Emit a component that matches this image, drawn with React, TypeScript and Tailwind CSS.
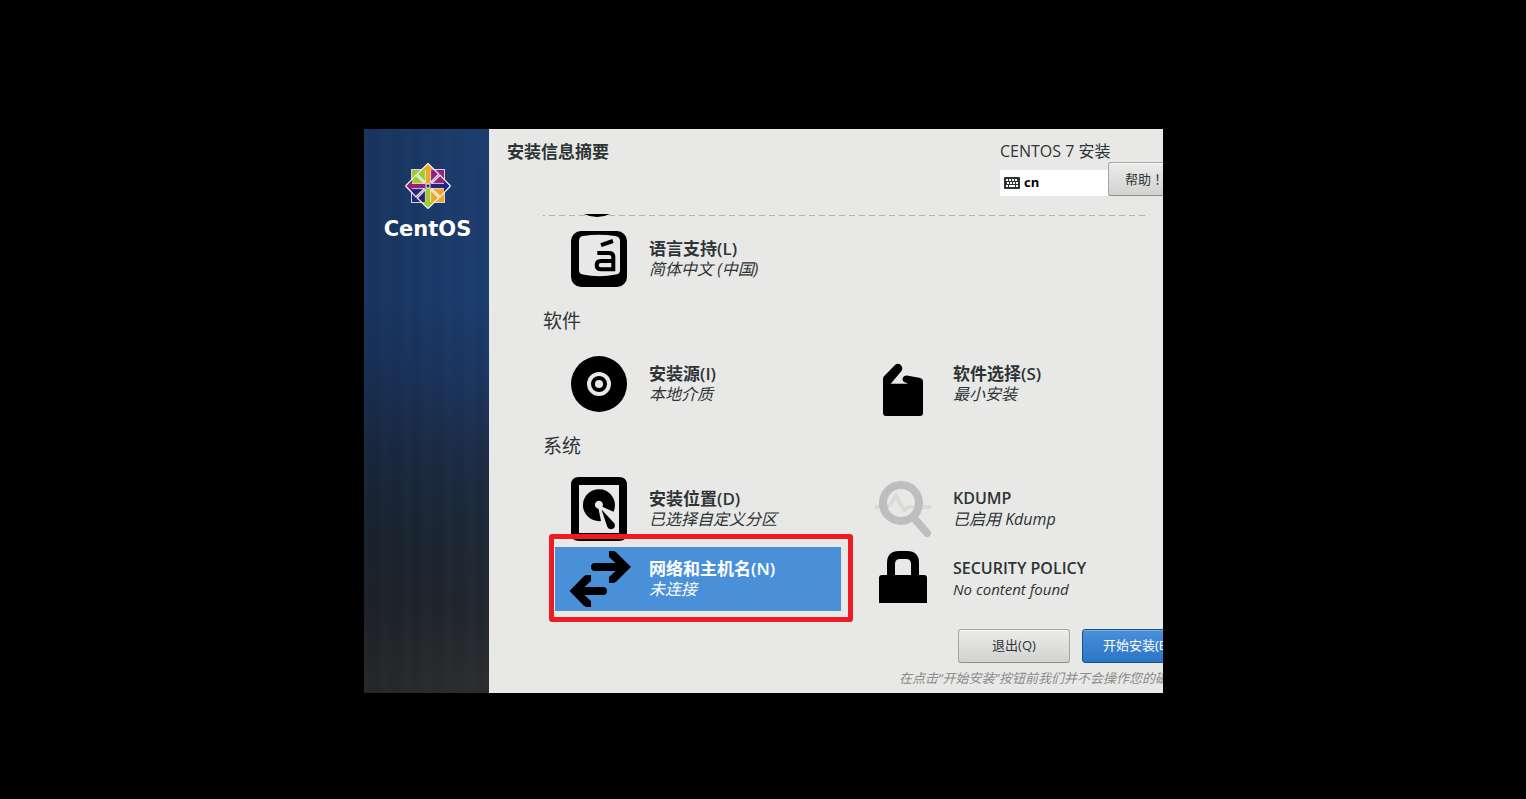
import type { ReactNode } from 'react';

function CentosMark() {
  return (
    <svg viewBox="-24 -24 48 48" className="size-12" aria-hidden="true">
      <g stroke="#d5d3e4" strokeWidth="1">
        <rect x="-16.5" y="-16.5" width="16.5" height="16.5" fill="#9ccd2a" />
        <rect x="0" y="-16.5" width="16.5" height="16.5" fill="#932279" />
        <rect x="-16.5" y="0" width="16.5" height="16.5" fill="#262577" />
        <rect x="0" y="0" width="16.5" height="16.5" fill="#efa724" />
      </g>
      <path d="M0-22.500 6.500-16H2.300V-2h-4.600V-16h-4.200z" fill="#efa724" />
      <path d="M22.500 0 16 6.500V2.300H2v-4.600H16v-4.200z" fill="#262577" />
      <path d="M0 22.500-6.500 16h4.200V2h4.600V16h4.200z" fill="#9ccd2a" />
      <path d="M-22.500 0-16-6.500v4.200H-2v4.600H-16v4.200z" fill="#932279" />
      <g fill="none" stroke="#f1eff6" strokeWidth="1.200">
        <path d="M0-22.500-10.800-12-2.500-3.500M0-22.500 10.800-12 2.500-3.500M0 22.500-10.800 12-2.500 3.500M0 22.500 10.800 12 2.500 3.500" />
        <path d="M-22.500 0-12-10.800-3.500-2.500M-22.500 0-12 10.800-3.500 2.500M22.500 0 12-10.800 3.500-2.500M22.500 0 12 10.800 3.500 2.500" />
        <path d="M-2.600-16V-3M2.600-16V-3M-2.600 16V3M2.600 16V3M-16-2.600H-3M-16 2.600H-3M16-2.600H3M16 2.600H3" strokeWidth="0.800" />
      </g>
      <rect x="-2" y="-2" width="4" height="4" fill="#1b3a6b" stroke="#f1eff6" strokeWidth="1" />
    </svg>
  );
}

function Glyph({ children }: { children: ReactNode }) {
  return (
    <svg viewBox="0 0 64 64" className="size-16 shrink-0" aria-hidden="true">
      {children}
    </svg>
  );
}

const languageIcon = (
  <Glyph>
    <rect x="4" y="4" width="56" height="56" rx="10" />
    <path d="M16 9q16-2.500 32 0 5 .5 5 5v29q0 4-4 4.500-17 3.500-33 0-4-.5-4-4.500V14q0-4.500 4-5z" fill="#e8e8e6" />
    <path d="M34 18.200 46 14M30.300 26H42q4.300 0 4.300 4v12.300H34q-4.300 0-4.300-4.100T34 34h12" fill="none" stroke="#000" strokeWidth="4" />
  </Glyph>
);

const discIcon = (
  <Glyph>
    <circle cx="32" cy="32" r="28" />
    <circle cx="32" cy="32" r="10" fill="none" stroke="#e8e8e6" strokeWidth="4" />
    <circle cx="32" cy="32" r="4" fill="#e8e8e6" />
  </Glyph>
);

const packageIcon = (
  <Glyph>
    <path d="M12 31.800V27q0-1.500 1-2.700L24 13q3-2.400 6 .2 2.400 3 .3 6L19.700 31.800h13.500q3.500 0 3-.9-4.700-.7-4.700-3.700.6-3.600 4.300-3.600L49.500 26q2.500.7 2.500 3.500V61q0 3-3 3H15q-3 0-3-3z" />
  </Glyph>
);

const driveIcon = (
  <Glyph>
    <path fillRule="evenodd" d="M12 0h40q8 0 8 8v48q0 8-8 8H12q-8 0-8-8V8q0-8 8-8zm0 8v48h40V8z" />
    <path d="M34 44A16 16 0 1 1 46.500 34.800L35.400 29.800A4 4 0 1 0 31.500 31.800z" />
    <path d="M34.500 32.500 47.500 46.500q1.500 5-3 5.700-3.600 0-4.600-3.500z" />
  </Glyph>
);

const networkIcon = (
  <Glyph>
    <path d="M28 16H48.500L42 10V4h4q2 0 3.400 1.400L64 20 49.400 34.600Q48 36 46 36h-4v-6L48.500 24H28a4 4 0 0 1 0-8z" />
    <path d="M36 40H17.500L24 34V28h-4q-2 0-3.400 1.400L2.500 44 16.600 58.600Q18 60 20 60h4v-6L17.500 48H36a4 4 0 0 0 0-8z" />
  </Glyph>
);

const kdumpIcon = (
  <Glyph>
    <path d="M4 30h11l4-2 6-9 8 14 5-3h22" fill="none" stroke="#dadad9" strokeWidth="4" />
    <circle cx="30" cy="26" r="18" fill="none" stroke="#bebebe" strokeWidth="8" />
    <path d="M43 41 56 56" stroke="#bebebe" strokeWidth="8" strokeLinecap="round" />
  </Glyph>
);

const lockIcon = (
  <Glyph>
    <path fillRule="evenodd" d="M16 28V16Q16 4 28 4h8q12 0 12 12v12h5q3 0 3 3v25H8V31q0-3 3-3zm8 0h16V17q0-5-5-5h-6q-5 0-5 5z" />
  </Glyph>
);

type SpokeProps = {
  icon: ReactNode;
  title: string;
  status: string;
  selected?: boolean;
  titleSize?: string;
  statusSize?: string;
};

function Spoke({
  icon,
  title,
  status,
  selected = false,
  titleSize = 'text-[17px]',
  statusSize = 'text-[16px]',
}: SpokeProps) {
  return (
    <button
      type="button"
      className={
        selected
          ? 'relative flex items-center gap-[18px] bg-[#4a90d9] px-3 text-left text-white'
          : 'flex items-center gap-[18px] px-3 text-left'
      }
    >
      {icon}
      <span className="flex flex-col whitespace-nowrap">
        <span className={`${titleSize} leading-[21px] font-semibold`}>{title}</span>
        <span className={`${statusSize} leading-[21px] italic`}>{status}</span>
      </span>
      {selected && (
        <span className="pointer-events-none absolute -top-[13px] -right-3 -bottom-[11px] -left-1.5 rounded-[3px] border-[5px] border-[#ed1c24]" />
      )}
    </button>
  );
}

function Keyboard() {
  return (
    <svg viewBox="0 0 16 12" className="h-3 w-4" aria-hidden="true">
      <rect width="16" height="12" rx="1" fill="#2e3436" />
      <path d="M2 3h12M3 6h11" stroke="#fff" strokeWidth="2" strokeDasharray="2 1" />
      <path d="M2 9h2M5 9h6M12 9h2" stroke="#fff" strokeWidth="2" />
    </svg>
  );
}

const plainButton =
  'h-[34px] shrink-0 rounded-[3px] border border-[#a6a6a4] border-b-[#8f8f8d] bg-linear-to-b from-[#ececeb] to-[#d2d2d0] text-[13px] whitespace-nowrap shadow-[inset_0_1px_0_#f8f8f8]';

export default function App() {
  return (
    <div className="flex min-h-screen items-start justify-center bg-black pt-[129px] pl-px font-['Open_Sans','Noto_Sans_CJK_SC',sans-serif] text-[#2e3436]">
      <div className="flex w-full max-w-[799px] overflow-hidden bg-[#e8e8e6]">
        <aside className="flex w-[125px] shrink-0 flex-col items-center bg-[repeating-linear-gradient(90deg,#ffffff03_0_3px,#00000000_8px_13px,#ffffff03_19px_21px),linear-gradient(90deg,#00000026,#00000000_90%),linear-gradient(180deg,#1b3c6c_0%,#1b3c6e_30%,#1a355e_44%,#1c2c46_57%,#1b2836_70%,#20262e_84%,#2b2c2d_98%)] pt-[33px] pl-0.5 text-white">
          <CentosMark />
          <div className="mt-1 font-['DejaVu_Sans',sans-serif] text-[21px] leading-[30px] font-bold">CentOS</div>
        </aside>

        <main className="min-w-0 flex-1">
          <header className="flex h-[85px] justify-between pl-[18px]">
            <h1 className="pt-3 text-[17px] leading-[21px] font-semibold">安装信息摘要</h1>
            <div className="w-[163px] pt-3">
              <div className="text-[16px] leading-[21px] whitespace-nowrap">CENTOS 7 安装</div>
              <div className="flex items-end">
                <div className="flex h-[26px] w-[108px] shrink-0 items-center gap-1 bg-white pl-1 text-[13px] font-bold text-black">
                  <Keyboard />
                  cn
                </div>
                <button type="button" className={`${plainButton} px-4 font-['Noto_Sans_CJK_TC',sans-serif]`}>
                  帮助！
                </button>
              </div>
            </div>
          </header>

          <section className="pr-[18px] pl-[54px]">
            <div className="relative h-[13px]">
              <div className="absolute inset-x-0 top-px h-px bg-[repeating-linear-gradient(90deg,#b4b4b2_0_2px,transparent_2px_6px,#b4b4b2_6px_10px)]" />
              <svg viewBox="0 0 26 3" className="relative ml-[41px] h-[3px] w-[26px]" aria-hidden="true">
                <path d="M0 0h26Q20 3 13 3T0 0z" />
              </svg>
            </div>
            <div className="grid grid-cols-2 gap-x-[18px] pl-3">
              <Spoke icon={languageIcon} title="语言支持(L)" status="简体中文 (中国)" />
            </div>
            <h2 className="h-[61px] pt-[18px] text-[19px] leading-6">软件</h2>
            <div className="grid grid-cols-2 gap-x-[18px] pl-3">
              <Spoke icon={discIcon} title="安装源(I)" status="本地介质" />
              <Spoke icon={packageIcon} title="软件选择(S)" status="最小安装" />
            </div>
            <h2 className="h-[61px] pt-[18px] text-[19px] leading-6">系统</h2>
            <div className="grid grid-cols-2 gap-x-[18px] gap-y-1.5 pl-3">
              <Spoke icon={driveIcon} title="安装位置(D)" status="已选择自定义分区" />
              <Spoke icon={kdumpIcon} title="KDUMP" status="已启用 Kdump" titleSize="text-[16px]" />
              <Spoke icon={networkIcon} title="网络和主机名(N)" status="未连接" selected />
              <Spoke
                icon={lockIcon}
                title="SECURITY POLICY"
                status="No content found"
                titleSize="text-[16px]"
                statusSize="text-[15px]"
              />
            </div>
          </section>

          <footer className="flex flex-col items-end pt-[18px] pb-[5px]">
            <div className="flex w-[205px] gap-3">
              <button type="button" className={`${plainButton} w-28`}>退出(Q)</button>
              <button
                type="button"
                className="h-[34px] shrink-0 rounded-[3px] border border-[#1c5187] bg-linear-to-b from-[#4a90d9] to-[#2a76c6] px-5 text-[13px] whitespace-nowrap text-white shadow-[inset_0_1px_0_#78aee4]"
              >
                开始安装(B)
              </button>
            </div>
            <p className="mt-[5px] w-[264px] text-[13px] leading-5 whitespace-nowrap text-[#8a8c8c] italic">
              在点击“开始安装”按钮前我们并不会操作您的磁盘。
            </p>
          </footer>
        </main>
      </div>
    </div>
  );
}
